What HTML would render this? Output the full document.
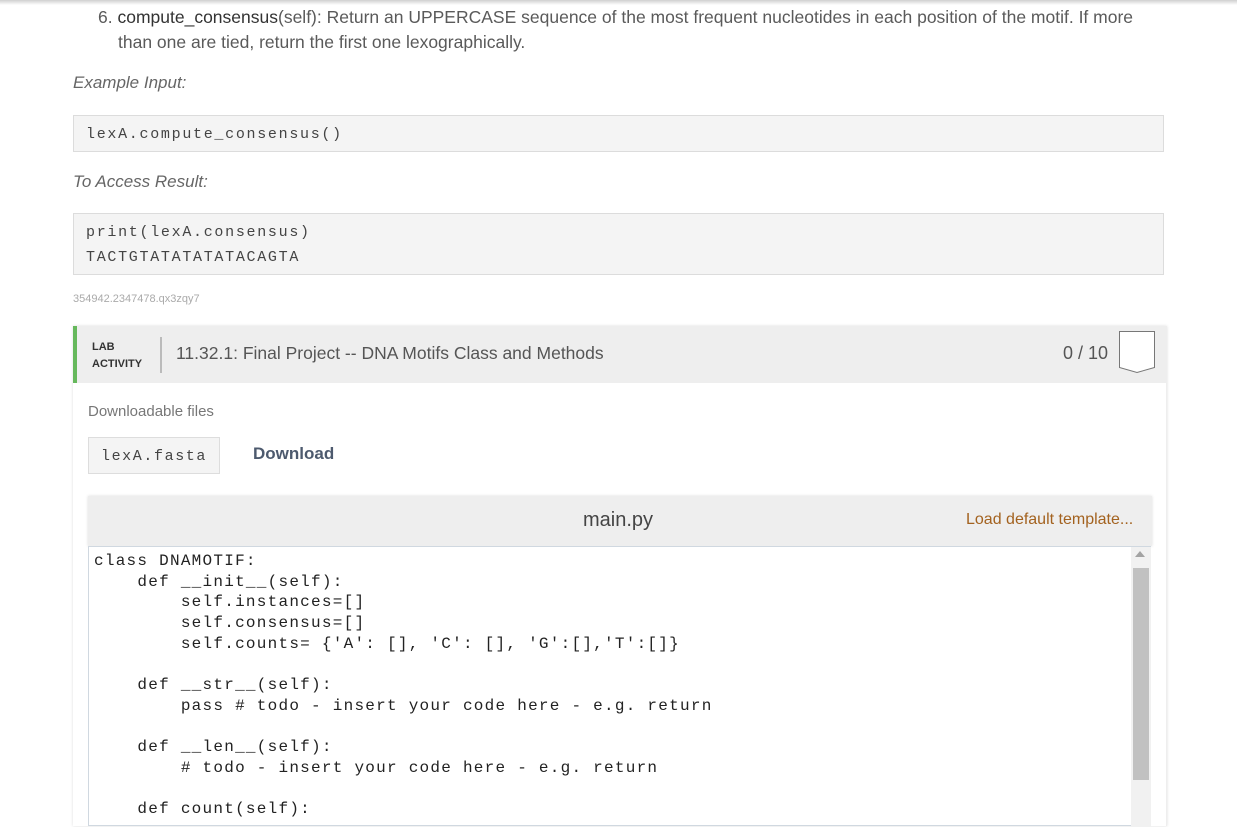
<!DOCTYPE html>
<html><head><style>
body{margin:0;width:1237px;height:822px;overflow:hidden;background:#fff;font-family:"Liberation Sans",sans-serif;color:#5a5a5a;position:relative}
.abs{position:absolute}
.topsh{left:0;top:0;width:1237px;height:5px;background:linear-gradient(#cfcfcf,#fff)}
.mono{font-family:"Liberation Mono",monospace}
.code{left:73px;width:1091px;background:#f4f4f4;border:1px solid #dcdcdc;color:#444;font-size:15px;letter-spacing:1.7px}
</style></head><body>
<div class="abs topsh"></div>
<div class="abs" style="left:98px;top:5px;font-size:17.5px;line-height:25px;color:#5a5a5a;width:1100px;white-space:nowrap">6. <span style="color:#333">compute_consensus</span>(self): Return an UPPERCASE sequence of the most frequent nucleotides in each position of the motif. If more<br><span style="padding-left:20px">than one are tied, return the first one lexographically.</span></div>
<div class="abs" style="left:73px;top:73px;font-size:17px;font-style:italic;color:#666">Example Input:</div>
<div class="abs code mono" style="top:115px;height:37px;line-height:37px;padding-left:12px;box-sizing:border-box">lexA.compute_consensus()</div>
<div class="abs" style="left:73px;top:172px;font-size:17px;font-style:italic;color:#666">To Access Result:</div>
<div class="abs code mono" style="top:213px;height:62px;padding:6px 0 0 12px;box-sizing:border-box;line-height:25px">print(lexA.consensus)<br>TACTGTATATATATACAGTA</div>
<div class="abs" style="left:73px;top:293px;font-size:11px;color:#aaa">354942.2347478.qx3zqy7</div>

<div class="abs" style="left:73px;top:326px;width:1093px;height:500px;border-right:1px solid #eee;box-shadow:0 0 3px #ddd"></div>
<div class="abs" style="left:73px;top:326px;width:1093px;height:57px;background:#eeeeee;border-left:4px solid #66b85c;box-sizing:border-box"></div>
<div class="abs" style="left:92px;top:339px;font-size:11px;font-weight:bold;color:#333;line-height:17px">LAB<br>ACTIVITY</div>
<div class="abs" style="left:160px;top:337px;width:2px;height:36px;background:#bbb"></div>
<div class="abs" style="left:176px;top:343px;font-size:17.5px;color:#555">11.32.1: Final Project -- DNA Motifs Class and Methods</div>
<div class="abs" style="left:1063px;top:343px;font-size:18px;color:#555">0 / 10</div>
<svg class="abs" style="left:1118px;top:330px" width="40" height="44"><path d="M1.5 1.5H36.5V37.5L19 42.5L1.5 37.5Z" fill="#fff" stroke="#777" stroke-width="1"/></svg>
<div class="abs" style="left:88px;top:403px;font-size:15px;color:#777">Downloadable files</div>
<div class="abs mono" style="left:88px;top:437px;width:132px;height:37px;line-height:37px;text-align:center;background:#f4f4f4;border:1px solid #ddd;box-sizing:border-box;font-size:15px;color:#444;letter-spacing:1.6px">lexA.fasta</div>
<div class="abs" style="left:253px;top:444px;font-size:17px;font-weight:bold;color:#4d5a6e">Download</div>

<div class="abs" style="left:88px;top:496px;width:1064px;height:50px;background:#eeeeee;box-shadow:0 0 3px #ddd"></div>
<div class="abs" style="left:583px;top:509px;font-size:20px;color:#444">main.py</div>
<div class="abs" style="left:966px;top:511px;font-size:16px;color:#a3621f">Load default template...</div>
<div class="abs" style="left:88px;top:546px;width:1063px;height:280px;border:1px solid #d0d8e0;box-sizing:border-box;background:#fff"></div>
<div class="abs" style="left:1131px;top:547px;width:20px;height:280px;background:#f1f1f1"></div>
<div class="abs" style="left:1135px;top:551px;width:0;height:0;border-left:5px solid transparent;border-right:5px solid transparent;border-bottom:6px solid #a3a3a3"></div>
<div class="abs" style="left:1133px;top:568px;width:16px;height:212px;background:#c1c1c1"></div>
<pre class="abs mono" style="left:94px;top:551px;margin:0;font-size:16px;line-height:20.7px;letter-spacing:1.25px;color:#222">class DNAMOTIF:
    def __init__(self):
        self.instances=[]
        self.consensus=[]
        self.counts= {'A': [], 'C': [], 'G':[],'T':[]}

    def __str__(self):
        pass # todo - insert your code here - e.g. return

    def __len__(self):
        # todo - insert your code here - e.g. return

    def count(self):</pre>
</body></html>
